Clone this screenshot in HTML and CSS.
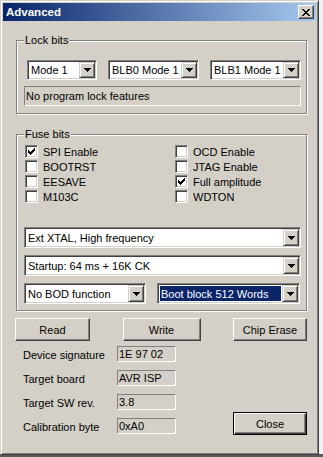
FILE: index.html
```html
<!DOCTYPE html>
<html lang="en">
<head>
  <meta charset="UTF-8" />
  <title>Advanced</title>
  <link rel="stylesheet" href="styles.css">
</head>
<body>

  <div class="window">
    <div class="titlebar">
      <span class="title">Advanced</span>
      <button class="close-x" title="Close">
        <svg width="8" height="7" viewBox="0 0 8 7"><path d="M0 0h2v1H0zM6 0h2v1H6zM1 1h2v1H1zM5 1h2v1H5zM2 2h4v1H2zM3 3h2v1H3zM2 4h4v1H2zM1 5h2v1H1zM5 5h2v1H5zM0 6h2v1H0zM6 6h2v1H6z" fill="#000"/></svg>
      </button>
    </div>

    <div class="content">
      <fieldset class="group lock">
        <legend>Lock bits</legend>
        <div class="lock-row">
          <div class="combo mode"><span class="value">Mode 1</span><span class="drop"><svg width="7" height="4" viewBox="0 0 7 4"><path d="M0 0h7v1H0zM1 1h5v1H1zM2 2h3v1H2zM3 3h1v1H3z"/></svg></span></div>
          <div class="combo blb"><span class="value">BLB0 Mode 1</span><span class="drop"><svg width="7" height="4" viewBox="0 0 7 4"><path d="M0 0h7v1H0zM1 1h5v1H1zM2 2h3v1H2zM3 3h1v1H3z"/></svg></span></div>
          <div class="combo blb"><span class="value">BLB1 Mode 1</span><span class="drop"><svg width="7" height="4" viewBox="0 0 7 4"><path d="M0 0h7v1H0zM1 1h5v1H1zM2 2h3v1H2zM3 3h1v1H3z"/></svg></span></div>
        </div>
        <div class="static">No program lock features</div>
      </fieldset>

      <fieldset class="group fuse">
        <legend>Fuse bits</legend>
        <div class="checks">
          <label class="check"><span class="box"><svg width="7" height="7" viewBox="0 0 7 7"><path d="M6 0h1v1H6zM5 1h2v1H5zM0 2h1v1H0zM4 2h3v1H4zM0 3h2v1H0zM3 3h3v1H3zM0 4h5v1H0zM1 5h3v1H1zM2 6h1v1H2z"/></svg></span>SPI Enable</label>
          <label class="check"><span class="box"></span>OCD Enable</label>
          <label class="check"><span class="box"></span>BOOTRST</label>
          <label class="check"><span class="box"></span>JTAG Enable</label>
          <label class="check"><span class="box"></span>EESAVE</label>
          <label class="check"><span class="box"><svg width="7" height="7" viewBox="0 0 7 7"><path d="M6 0h1v1H6zM5 1h2v1H5zM0 2h1v1H0zM4 2h3v1H4zM0 3h2v1H0zM3 3h3v1H3zM0 4h5v1H0zM1 5h3v1H1zM2 6h1v1H2z"/></svg></span>Full amplitude</label>
          <label class="check"><span class="box"></span>M103C</label>
          <label class="check"><span class="box"></span>WDTON</label>
        </div>

        <div class="combo wide first"><span class="value">Ext XTAL, High frequency</span><span class="drop"><svg width="7" height="4" viewBox="0 0 7 4"><path d="M0 0h7v1H0zM1 1h5v1H1zM2 2h3v1H2zM3 3h1v1H3z"/></svg></span></div>
        <div class="combo wide"><span class="value">Startup: 64 ms + 16K CK</span><span class="drop"><svg width="7" height="4" viewBox="0 0 7 4"><path d="M0 0h7v1H0zM1 1h5v1H1zM2 2h3v1H2zM3 3h1v1H3z"/></svg></span></div>
        <div class="combo-row">
          <div class="combo bod"><span class="value">No BOD function</span><span class="drop"><svg width="7" height="4" viewBox="0 0 7 4"><path d="M0 0h7v1H0zM1 1h5v1H1zM2 2h3v1H2zM3 3h1v1H3z"/></svg></span></div>
          <div class="combo boot"><span class="value selected">Boot block 512 Words</span><span class="drop"><svg width="7" height="4" viewBox="0 0 7 4"><path d="M0 0h7v1H0zM1 1h5v1H1zM2 2h3v1H2zM3 3h1v1H3z"/></svg></span></div>
        </div>
      </fieldset>

      <div class="buttons">
        <button class="btn read">Read</button>
        <button class="btn write">Write</button>
        <button class="btn erase">Chip Erase</button>
      </div>

      <div class="info">
        <div class="info-rows">
          <div class="info-row"><span class="label">Device signature</span><span class="field">1E 97 02</span></div>
          <div class="info-row"><span class="label">Target board</span><span class="field">AVR ISP</span></div>
          <div class="info-row"><span class="label">Target SW rev.</span><span class="field">3.8</span></div>
          <div class="info-row"><span class="label">Calibration byte</span><span class="field">0xA0</span></div>
        </div>
        <button class="btn default">Close</button>
      </div>
    </div>
  </div>

</body>
</html>
```

FILE: styles.css
```css
* { box-sizing: border-box; margin: 0; padding: 0; }

body {
  font-family: "Liberation Sans", Arial, sans-serif;
  font-size: 11px;
  color: #000;
  width: 323px;
  height: 457px;
  overflow: hidden;
  background: linear-gradient(to bottom, #f2f2f2 454px, #5b5b5b 454px);
}

.window {
  width: 319px;
  height: 455px;
  background: #d4d0c8;
  border: 1px solid;
  border-color: #d4d0c8 #404040 #404040 #d4d0c8;
  box-shadow: inset 1px 1px 0 #fff, inset -1px -1px 0 #808080;
  padding: 2px;
}

.titlebar {
  height: 18px;
  display: flex;
  align-items: center;
  justify-content: space-between;
  padding: 0 2px 0 3px;
  background: linear-gradient(to right, #0a246a, #a6caf0);
  color: #fff;
}

.title {
  font-weight: bold;
  font-size: 11.5px;
}

.close-x {
  width: 16px;
  height: 14px;
  display: flex;
  align-items: center;
  justify-content: center;
  background: #d4d0c8;
  border: 1px solid;
  border-color: #fff #404040 #404040 #fff;
  box-shadow: inset -1px -1px 0 #808080;
}

.content {
  padding: 13px 9px 0 13px;
}

/* group boxes */
.group {
  width: 291px;
  min-width: 0;
  border: 1px solid #808080;
  box-shadow: inset 1px 1px 0 #fff, 1px 1px 0 #fff;
  padding: 13px 5px 7px 7px;
}

.group legend {
  padding: 0 1px;
  line-height: 13px;
  background: #d4d0c8;
}

.fuse {
  margin-top: 14px;
  padding-top: 3px;
  padding-bottom: 6px;
}

.lock-row {
  display: flex;
  gap: 11px;
  padding-left: 3px;
}

.static {
  margin-top: 6px;
  height: 20px;
  line-height: 18px;
  padding-left: 1px;
  border: 1px solid;
  border-color: #808080 #fff #fff #808080;
}

/* combo boxes */
.combo {
  display: flex;
  height: 21px;
  background: #fff;
  border: 1px solid;
  border-color: #808080 #fff #fff #808080;
  box-shadow: inset 1px 1px 0 #404040, inset -1px -1px 0 #d4d0c8;
  padding: 1px;
}

.lock .combo { height: 20px; }
.combo.mode { width: 70px; }
.combo.blb { width: 91px; }
.combo.wide { width: 277px; margin-top: 7px; }
.combo.wide.first { margin-top: 23px; }
.combo.bod { width: 122px; }
.combo.boot { width: 143px; }

.combo .value {
  flex: 1;
  display: flex;
  align-items: center;
  padding-left: 2px;
  white-space: nowrap;
  overflow: hidden;
}

.combo .value.selected {
  background: #0a246a;
  color: #fff;
  margin: 1px 1px 1px 1px;
  padding-left: 1px;
}

.combo .drop {
  width: 16px;
  display: flex;
  align-items: center;
  justify-content: center;
  background: #d4d0c8;
  border: 1px solid;
  border-color: #d4d0c8 #404040 #404040 #d4d0c8;
  box-shadow: inset 1px 1px 0 #fff, inset -1px -1px 0 #808080;
}

.combo-row {
  display: flex;
  gap: 11px;
  margin-top: 7px;
}

/* checkboxes */
.checks {
  display: grid;
  grid-template-columns: 150px 1fr;
  grid-auto-rows: 15px;
  padding-left: 1px;
}

.check {
  display: flex;
  align-items: center;
  gap: 5px;
}

.box {
  width: 13px;
  height: 13px;
  display: flex;
  align-items: center;
  justify-content: center;
  background: #fff;
  border: 1px solid;
  border-color: #808080 #fff #fff #808080;
  box-shadow: inset 1px 1px 0 #404040, inset -1px -1px 0 #d4d0c8;
}

/* buttons */
.buttons {
  display: flex;
  justify-content: space-between;
  margin: 7px 0 0 -1px;
  width: 292px;
}

.btn {
  height: 23px;
  font-family: inherit;
  font-size: 11px;
  color: #000;
  background: #d4d0c8;
  border: 1px solid;
  border-color: #fff #404040 #404040 #fff;
  box-shadow: inset -1px -1px 0 #808080;
}

.btn.read { width: 75px; }
.btn.write { width: 78px; }
.btn.erase { width: 74px; }

.btn.default {
  width: 74px;
  height: 23px;
  border: 1px solid #000;
  box-shadow: inset 1px 1px 0 #fff, inset -1px -1px 0 #404040, inset -2px -2px 0 #808080;
  margin-bottom: -1px;
}

/* info rows */
.info {
  display: flex;
  justify-content: space-between;
  align-items: flex-end;
  margin-top: 5px;
  width: 292px;
  margin-left: -1px;
}

.info-rows {
  display: flex;
  flex-direction: column;
  gap: 8px;
  padding-left: 8px;
}

.info-row {
  display: flex;
  align-items: center;
  height: 16px;
}

.label {
  width: 94px;
  padding-top: 2px;
}

.field {
  width: 59px;
  height: 16px;
  line-height: 14px;
  padding-left: 1px;
  border: 1px solid;
  border-color: #808080 #fff #fff #808080;
}
```
